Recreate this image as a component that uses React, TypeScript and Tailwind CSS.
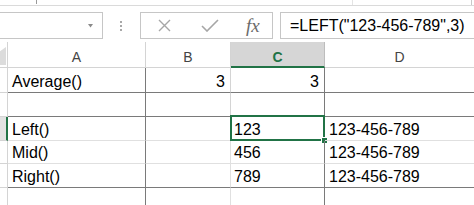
import React from "react";

const DARK = "border-[#7a7a7a]";

function Cell({
  className = "",
  children,
}: {
  className?: string;
  children?: React.ReactNode;
}) {
  return (
    <div className={`relative flex items-end overflow-visible whitespace-nowrap pb-[1px] text-[16px] leading-[18px] text-black ${className}`}>
      {children}
    </div>
  );
}

export default function App() {
  return (
    <div className="relative h-[205px] w-[474px] overflow-hidden bg-white" style={{ fontFamily: '"Liberation Sans", Arial, sans-serif' }}>
      {/* ribbon remnant */}
      <div className="relative h-[6px] border-b border-[#dadada]">
        <div className="absolute left-[36px] top-0 h-[4px] w-px bg-[#9a9a9a]" />
        <div className="absolute left-[352px] top-0 h-[5px] w-px bg-[#e4e4e4]" />
        <div className="absolute left-[471px] top-0 h-[5px] w-px bg-[#c8c8c8]" />
      </div>

      {/* formula bar */}
      <div className="mt-[6px] flex h-[27px] items-stretch">
        <div className="relative -ml-px w-[104px] border border-[#c6c6c6] bg-white">
          <svg className="absolute left-[88px] top-[11px]" width="5" height="4" viewBox="0 0 5 4">
            <path d="M0 0 L5 0 L2.5 3.5 Z" fill="#8a8a8a" />
          </svg>
        </div>
        <div className="flex w-[37px] flex-col items-center justify-center gap-[2px] pr-[1px]">
          <span className="block h-[2px] w-[2px] bg-[#a8a8a8]" />
          <span className="block h-[2px] w-[2px] bg-[#a8a8a8]" />
          <span className="block h-[2px] w-[2px] bg-[#a8a8a8]" />
        </div>
        <div className="flex w-[133px] items-center border border-[#c6c6c6] bg-white">
          <svg className="ml-[17px]" width="13" height="13" viewBox="0 0 13 13">
            <path d="M1 1 L12 12 M12 1 L1 12" stroke="#a6a6a6" strokeWidth="1.4" fill="none" />
          </svg>
          <svg className="ml-[30px]" width="18" height="13" viewBox="0 0 18 13">
            <path d="M1 7 L6 12 L17 1" stroke="#a6a6a6" strokeWidth="1.6" fill="none" />
          </svg>
          <span
            className="ml-[27px] text-[19px] italic leading-none text-[#6b6b6b]"
            style={{ fontFamily: '"Liberation Serif", "Times New Roman", serif' }}
          >
            fx
          </span>
        </div>
        <div className="ml-[7px] flex flex-1 items-center border border-r-0 border-[#c6c6c6] bg-white pl-[9px] pt-[1px] text-[16px] text-black">
          =LEFT("123-456-789",3)
        </div>
      </div>

      {/* grid */}
      <div className="mt-[3px] grid grid-cols-[8px_138px_85px_94px_1fr] grid-rows-[26px_25px_24px_24px_23px_24px_30px]">
        {/* header row */}
        <div className="relative border-r border-b border-[#d4d4d4] bg-white">
          <svg className="absolute bottom-[2px] right-[1px]" width="7" height="18" viewBox="0 0 7 18">
            <path d="M7 0 L7 18 L0 18 L0 5 Z" fill="#dcdcdc" />
          </svg>
        </div>
        <div className="flex items-end justify-center border-r border-b border-[#d4d4d4] pb-[2px] text-[14px] leading-[16px] text-[#444]">A</div>
        <div className="flex items-end justify-center border-r border-b border-[#d4d4d4] pb-[2px] text-[14px] leading-[16px] text-[#444]">B</div>
        <div className="flex items-end justify-center border-r border-[#bdbdbd] border-b-2 border-b-[#217346] bg-[#d6d6d6] pb-[1px] text-[14px] font-bold leading-[16px] text-[#217346]">C</div>
        <div className="flex items-end justify-center border-b border-[#d4d4d4] pb-[2px] text-[14px] leading-[16px] text-[#444]">D</div>

        {/* row 1 */}
        <div className={`border-r border-[#d4d4d4] border-b ${DARK}`} />
        <Cell className={`border-r border-b ${DARK} pl-[4px]`}>Average()</Cell>
        <Cell className={`justify-end border-r border-r-[#d4d4d4] border-b ${DARK} pr-[5px]`}>3</Cell>
        <Cell className={`justify-end border-r border-b ${DARK} pr-[5px]`}>3</Cell>
        <Cell className={`border-b ${DARK}`} />

        {/* row 2 */}
        <div className={`border-r border-[#d4d4d4] border-b ${DARK}`} />
        <Cell className={`border-r border-b ${DARK}`} />
        <Cell className={`border-r border-r-[#d4d4d4] border-b ${DARK}`} />
        <Cell className={`border-r border-b ${DARK}`} />
        <Cell className={`border-b ${DARK}`} />

        {/* row 3 - active */}
        <div className="border-r-2 border-r-[#217346] border-b border-b-[#d4d4d4] bg-[#e2e2e2]" />
        <Cell className={`border-r ${DARK} border-b border-b-[#e0e0e0] pl-[4px]`}>Left()</Cell>
        <Cell className="border-r border-b border-[#e0e0e0]" />
        <Cell className={`border-r ${DARK} border-b border-b-[#e0e0e0] pl-[3px]`}>
          <span>123</span>
          <div className="pointer-events-none absolute -left-[1px] -top-[2px] -bottom-[1px] -right-[1px] border-2 border-[#217346]" />
          <div className="absolute -bottom-[3px] -right-[3px] h-[5px] w-[5px] bg-[#217346] outline outline-1 outline-white" />
        </Cell>
        <Cell className="border-b border-b-[#e0e0e0] pl-[4px]">123-456-789</Cell>

        {/* row 4 */}
        <div className="border-r border-b border-[#d4d4d4] bg-white" />
        <Cell className={`border-r ${DARK} border-b border-b-[#e0e0e0] pl-[4px]`}>Mid()</Cell>
        <Cell className="border-r border-b border-[#e0e0e0]" />
        <Cell className={`border-r ${DARK} border-b border-b-[#e0e0e0] pl-[3px]`}>456</Cell>
        <Cell className="border-b border-b-[#e0e0e0] pl-[4px]">123-456-789</Cell>

        {/* row 5 */}
        <div className={`border-r border-[#d4d4d4] border-b ${DARK} bg-white`} />
        <Cell className={`border-r border-b ${DARK} pl-[4px]`}>Right()</Cell>
        <Cell className={`border-r border-r-[#e0e0e0] border-b ${DARK}`} />
        <Cell className={`border-r border-b ${DARK} pl-[3px]`}>789</Cell>
        <Cell className={`border-b ${DARK} pl-[4px]`}>123-456-789</Cell>

        {/* row 6 */}
        <div className="border-r border-[#d4d4d4]" />
        <Cell className={`border-r ${DARK}`} />
        <Cell className="border-r border-[#e0e0e0]" />
        <Cell className={`border-r ${DARK}`} />
        <Cell />
      </div>
    </div>
  );
}
